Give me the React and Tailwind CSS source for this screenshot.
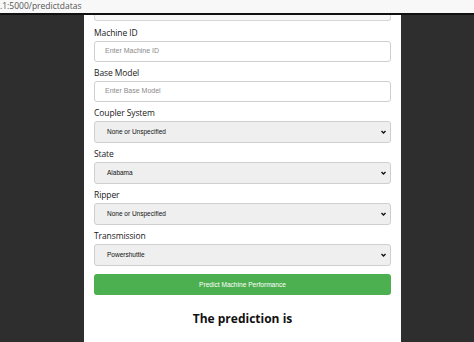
import React from "react";

const font = { fontFamily: '"Open Sans", "Noto Sans", sans-serif' };
const arial = { fontFamily: '"Liberation Sans", Arial, sans-serif' };

function Chevron() {
  return (
    <svg width="5" height="4" viewBox="0 0 10 7" className="shrink-0 mr-[1px]">
      <path d="M1 1.5 L5 5.5 L9 1.5" fill="none" stroke="#111" strokeWidth="2.8" />
    </svg>
  );
}

function Label({ children }) {
  return <div className="text-[8.5px] leading-[13px] text-[#1a1a1a] mt-[4px] mb-[2px] tracking-[-0.1px]" style={font}>{children}</div>;
}

function Input({ placeholder }) {
  return (
    <div className="h-[21px] border border-[#cfcfcf] rounded-[3px] bg-white flex items-center pl-[10px] text-[7px] text-[#8a8a8a]" style={arial}>
      {placeholder}
    </div>
  );
}

function Select({ value }) {
  return (
    <div className="h-[22px] border border-[#cfcfcf] rounded-[3px] bg-[#efefef] flex items-center justify-between pl-[12px] pr-[3px] text-[6.5px] text-[#111]" style={arial}>
      <span>{value}</span>
      <Chevron />
    </div>
  );
}

export default function App() {
  return (
    <div className="w-[474px] h-[342px] overflow-hidden bg-[#2e2e2e] flex flex-col">
      <div className="h-[13px] bg-[#f8f8f8] flex items-center text-[8.5px] text-[#555] leading-none shrink-0" style={font}>
        <span>.1:5000/predictdatas</span>
      </div>
      <div className="h-[2px] bg-[#111] shrink-0" />
      <div className="flex flex-1 min-h-0">
        <div className="w-[84px] shrink-0" />
        <div className="w-[317px] bg-white px-[10px] flex flex-col">
          <div className="h-[6px] border border-t-0 border-[#d6d6d6] rounded-b-[3px] bg-[#f7f7f7]" />
          <div className="h-[1px]" />
          <Label>Machine ID</Label>
          <Input placeholder="Enter Machine ID" />
          <Label>Base Model</Label>
          <Input placeholder="Enter Base Model" />
          <Label>Coupler System</Label>
          <Select value="None or Unspecified" />
          <Label>State</Label>
          <Select value="Alabama" />
          <Label>Ripper</Label>
          <Select value="None or Unspecified" />
          <Label>Transmission</Label>
          <Select value="Powershuttle" />
          <div className="mt-[8px] h-[21px] rounded-[3px] bg-[#4caf50] flex items-center justify-center text-[6.6px] text-white" style={arial}>
            Predict Machine Performance
          </div>
          <div className="mt-[14px] text-center text-[12px] font-bold text-[#111] leading-[20px]" style={font}>
            The prediction is
          </div>
        </div>
      </div>
    </div>
  );
}
